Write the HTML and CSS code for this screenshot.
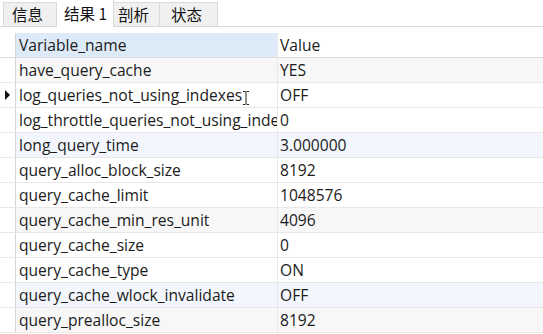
FILE: index.html
```html
<!DOCTYPE html>
<html lang="zh">
<head>
<meta charset="utf-8">
<title>结果 1</title>
<link rel="stylesheet" href="styles.css">
</head>
<body>
<div class="tabs">
  <div class="tab t1">信息</div>
  <div class="tab t2 active">结果 1</div>
  <div class="tab t3">剖析</div>
  <div class="tab t4">状态</div>
</div>
<div class="grid">
  <div class="row head">
    <div class="gut"></div>
    <div class="cell c1 sel">Variable_name</div>
    <div class="cell c2">Value</div>
  </div>
  <div class="row gray"><div class="gut"></div><div class="cell c1">have_query_cache</div><div class="cell c2">YES</div></div>
  <div class="row"><div class="gut"><span class="arrow"></span></div><div class="cell c1">log_queries_not_using_indexes</div><div class="cell c2">OFF</div>
    <svg class="cursor" width="8" height="16" viewBox="0 0 8 16"><path d="M1 1.5h2.2l0.8 0.8 0.8-0.8H7M4 2.3v11.4M1 14.5h2.2l0.8-0.8 0.8 0.8H7" fill="none" stroke="#222" stroke-width="1"/></svg>
  </div>
  <div class="row"><div class="gut"></div><div class="cell c1">log_throttle_queries_not_using_indexes</div><div class="cell c2">0</div></div>
  <div class="row blue"><div class="gut"></div><div class="cell c1">long_query_time</div><div class="cell c2">3.000000</div></div>
  <div class="row"><div class="gut"></div><div class="cell c1">query_alloc_block_size</div><div class="cell c2">8192</div></div>
  <div class="row"><div class="gut"></div><div class="cell c1">query_cache_limit</div><div class="cell c2">1048576</div></div>
  <div class="row gray"><div class="gut"></div><div class="cell c1">query_cache_min_res_unit</div><div class="cell c2">4096</div></div>
  <div class="row"><div class="gut"></div><div class="cell c1">query_cache_size</div><div class="cell c2">0</div></div>
  <div class="row"><div class="gut"></div><div class="cell c1">query_cache_type</div><div class="cell c2">ON</div></div>
  <div class="row blue"><div class="gut"></div><div class="cell c1">query_cache_wlock_invalidate</div><div class="cell c2">OFF</div></div>
  <div class="row gray"><div class="gut"></div><div class="cell c1">query_prealloc_size</div><div class="cell c2">8192</div></div>
</div>
</body>
</html>
```

FILE: styles.css
```css
html, body {
  margin: 0;
  padding: 0;
  background: #ffffff;
  overflow: hidden;
}
body {
  width: 543px;
  height: 334px;
  font-family: "Open Sans", "Noto Sans CJK SC", sans-serif;
  color: #1b1b1b;
}
.tabs {
  height: 27px;
  box-sizing: border-box;
  border-bottom: 1px solid #d9d9d9;
  display: flex;
  align-items: flex-end;
  padding-left: 3px;
}
.tab {
  box-sizing: border-box;
  height: 24px;
  background: #f0f0f0;
  border: 1px solid #dadada;
  border-bottom: none;
  margin-bottom: 0;
  font-family: "Noto Sans CJK SC", sans-serif;
  font-size: 15.5px;
  line-height: 23px;
  padding-left: 8px;
  color: #111;
}
.t1 { width: 54px; }
.t2 { width: 57px; }
.t3 { width: 46px; border-left: none; padding-left: 4px; }
.t4 { width: 58px; border-left: none; padding-left: 11px; }
.tab.active {
  background: #ffffff;
  height: 28px;
  margin-bottom: -1px;
  border-left: none;
  line-height: 26px;
  padding-left: 7px;
}
.grid {
  margin-top: 6px;
  display: flex;
  flex-direction: column;
}
.row {
  position: relative;
  display: grid;
  grid-template-columns: 16px 262px 1fr;
  height: 25px;
  box-sizing: border-box;
  border-bottom: 1px solid #e8e8e8;
}
.row.head {
  border-bottom-color: #dcdcdc;
}
.row.gray { background: #f7f7f7; }
.row.blue { background: #f3f7fd; }
.gut {
  background: #ffffff;
  border-right: 1px solid #d6d6d6;
  position: relative;
}
.cell {
  font-size: 15.6px;
  line-height: 25px;
  white-space: nowrap;
  overflow: hidden;
  padding-left: 3px;
}
.c1 {
  border-right: 1px solid #e8e8e8;
}
.c2 {
  padding-left: 2px;
}
.sel {
  background: #ddeaf8;
}
.arrow {
  position: absolute;
  left: 5px;
  top: 7px;
  width: 0;
  height: 0;
  border-top: 5px solid transparent;
  border-bottom: 5px solid transparent;
  border-left: 5px solid #111;
}
.cursor {
  position: absolute;
  left: 242px;
  top: 7px;
}
```
